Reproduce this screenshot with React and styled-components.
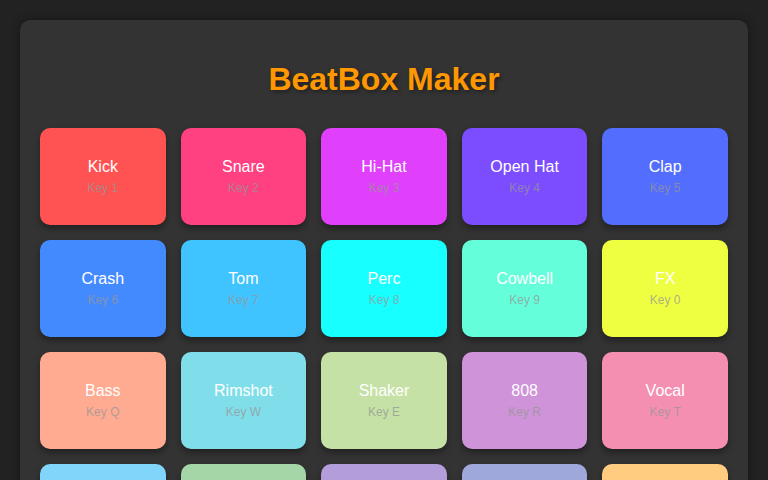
import styled, { createGlobalStyle } from "styled-components";

const GlobalStyle = createGlobalStyle`
    body {
        margin: 0;
        background: #222;
        font-family: "Liberation Sans", Arial, sans-serif;
    }
`;

const Page = styled.div`
    padding: 20px;
`;

const Panel = styled.main`
    background: #333;
    border-radius: 10px;
    padding: 20px;
    box-shadow: 0 0 10px rgba(0, 0, 0, 0.4);
`;

const Title = styled.h1`
    margin: 21px 0 30px;
    text-align: center;
    font-size: 32px;
    font-weight: bold;
    color: #ff9800;
    text-shadow: 2px 2px 4px rgba(0, 0, 0, 0.4);
`;

const PadGrid = styled.div`
    display: grid;
    grid-template-columns: repeat(5, 1fr);
    gap: 15px;
`;

const Pad = styled.button`
    height: 97px;
    border: none;
    border-radius: 10px;
    background: ${({ $couleur }) => $couleur};
    box-shadow: 0 4px 6px rgba(0, 0, 0, 0.35);
    display: flex;
    flex-direction: column;
    align-items: center;
    justify-content: center;
    gap: 5px;
    padding: 0 0 1px;
    font-family: inherit;
    cursor: pointer;
`;

const PadLabel = styled.span`
    color: #fff;
    font-size: 16px;
`;

const PadKey = styled.span`
    color: rgba(150, 150, 150, 0.75);
    font-size: 12px;
`;

const pads = [
    { nom: "Kick", touche: "1", couleur: "#ff5252" },
    { nom: "Snare", touche: "2", couleur: "#ff4081" },
    { nom: "Hi-Hat", touche: "3", couleur: "#e040fb" },
    { nom: "Open Hat", touche: "4", couleur: "#7c4dff" },
    { nom: "Clap", touche: "5", couleur: "#536dfe" },
    { nom: "Crash", touche: "6", couleur: "#448aff" },
    { nom: "Tom", touche: "7", couleur: "#40c4ff" },
    { nom: "Perc", touche: "8", couleur: "#18ffff" },
    { nom: "Cowbell", touche: "9", couleur: "#64ffda" },
    { nom: "FX", touche: "0", couleur: "#eeff41" },
    { nom: "Bass", touche: "Q", couleur: "#ffab91" },
    { nom: "Rimshot", touche: "W", couleur: "#80deea" },
    { nom: "Shaker", touche: "E", couleur: "#c5e1a5" },
    { nom: "808", touche: "R", couleur: "#ce93d8" },
    { nom: "Vocal", touche: "T", couleur: "#f48fb1" },
    { nom: "Synth", touche: "Y", couleur: "#81d4fa" },
    { nom: "Pad", touche: "U", couleur: "#a5d6a7" },
    { nom: "Lead", touche: "I", couleur: "#b39ddb" },
    { nom: "Chord", touche: "O", couleur: "#9fa8da" },
    { nom: "Noise", touche: "P", couleur: "#ffcc80" },
];

const App = () => {
    return (
        <Page>
            <GlobalStyle />
            <Panel>
                <Title>BeatBox Maker</Title>
                <PadGrid>
                    {pads.map((pad) => (
                        <Pad key={pad.nom} $couleur={pad.couleur}>
                            <PadLabel>{pad.nom}</PadLabel>
                            <PadKey>Key {pad.touche}</PadKey>
                        </Pad>
                    ))}
                </PadGrid>
            </Panel>
        </Page>
    );
};

export default App;
